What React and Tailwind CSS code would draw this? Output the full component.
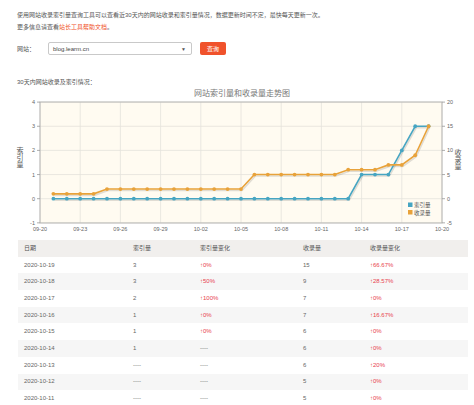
import React from 'react';

const FONT = { fontFamily: '"Liberation Sans", "Noto Sans CJK SC", sans-serif' };

// day offsets from 09-20, one point per day 09-21..10-19
const indexData = [...Array(23).fill(0), 1, 1, 1, 2, 3, 3];
const recordData = [
  ...Array(4).fill(1),
  ...Array(11).fill(2),
  ...Array(7).fill(5),
  6, 6, 6, 7, 7, 9, 15,
];

const X0 = 40;
const DAY = 13.4;
const Y0 = 198.7;
const xAt = (d) => X0 + d * DAY;
const yLeft = (v) => Y0 - v * 24.15;
const yRight = (v) => Y0 - v * 4.83;

const xLabels = ['09-20', '09-23', '09-26', '09-29', '10-02', '10-05', '10-08', '10-11', '10-14', '10-17', '10-20'];
const leftTicks = [4, 3, 2, 1, 0, -1];
const rightTicks = [20, 15, 10, 5, 0, -5];

const rows = [
  ['2020-10-19', '3', '↑0%', '15', '↑66.67%'],
  ['2020-10-18', '3', '↑50%', '9', '↑28.57%'],
  ['2020-10-17', '2', '↑100%', '7', '↑0%'],
  ['2020-10-16', '1', '↑0%', '7', '↑16.67%'],
  ['2020-10-15', '1', '↑0%', '6', '↑0%'],
  ['2020-10-14', '1', '----', '6', '↑0%'],
  ['2020-10-13', '----', '----', '6', '↑20%'],
  ['2020-10-12', '----', '----', '5', '↑0%'],
  ['2020-10-11', '----', '----', '5', '↑0%'],
];

function Chart() {
  const blue = '#46a5c2';
  const orange = '#e8a23a';
  const bluePts = indexData.map((v, i) => [xAt(i + 1), yLeft(v)]);
  const orangePts = recordData.map((v, i) => [xAt(i + 1), yRight(v)]);
  const toStr = (pts) => pts.map((p) => p.join(',')).join(' ');

  return (
    <svg width="474" height="148" viewBox="0 88 474 148" className="block" style={FONT}>
      <rect x={X0} y="102" width="402" height="121" fill="#fffbf1" />
      {leftTicks.map((t) => (
        <line key={t} x1={X0} x2="442" y1={yLeft(t)} y2={yLeft(t)} stroke="#e4e2dc" strokeWidth="0.8" />
      ))}
      {xLabels.map((l, i) => (
        <line key={l} x1={xAt(i * 3)} x2={xAt(i * 3)} y1="102" y2="223" stroke="#e4e2dc" strokeWidth="0.8" />
      ))}
      <rect x={X0} y="102" width="402" height="121" fill="none" stroke="#a9a9a9" strokeWidth="0.8" />

      <text x="242" y="96" textAnchor="middle" fontSize="8" fill="#777">网站索引量和收录量走势图</text>

      {leftTicks.map((t) => (
        <g key={t}>
          <line x1="37" x2={X0} y1={yLeft(t)} y2={yLeft(t)} stroke="#999" strokeWidth="0.8" />
          <text x="35" y={yLeft(t) + 2} textAnchor="end" fontSize="5.5" fill="#666">{t}</text>
        </g>
      ))}
      {rightTicks.map((t, i) => (
        <g key={t}>
          <line x1="442" x2="445" y1={yLeft(leftTicks[i])} y2={yLeft(leftTicks[i])} stroke="#999" strokeWidth="0.8" />
          <text x="447" y={yLeft(leftTicks[i]) + 2} fontSize="5.5" fill="#666">{t}</text>
        </g>
      ))}
      {xLabels.map((l, i) => (
        <text key={l} x={xAt(i * 3)} y="231" textAnchor="middle" fontSize="5.5" fill="#666">{l}</text>
      ))}

      {['索', '引', '量'].map((c, i) => (
        <text key={c} x="20" y={153 + i * 7} textAnchor="middle" fontSize="7" fill="#555">{c}</text>
      ))}
      {['收', '录', '量'].map((c, i) => (
        <text key={c} x="458" y={155 + i * 7} textAnchor="middle" fontSize="7" fill="#555">{c}</text>
      ))}

      <polyline points={toStr(orangePts.map(([x, y]) => [x + 1, y + 1.5]))} fill="none" stroke="#000" strokeOpacity="0.12" strokeWidth="1.6" />
      <polyline points={toStr(bluePts.map(([x, y]) => [x + 1, y + 1.5]))} fill="none" stroke="#000" strokeOpacity="0.12" strokeWidth="1.6" />
      <polyline points={toStr(bluePts)} fill="none" stroke={blue} strokeWidth="1.6" />
      {bluePts.map(([x, y], i) => (
        <circle key={'b' + i} cx={x} cy={y} r="1.9" fill={blue} />
      ))}
      <polyline points={toStr(orangePts)} fill="none" stroke={orange} strokeWidth="1.6" />
      {orangePts.map(([x, y], i) => (
        <circle key={'o' + i} cx={x} cy={y} r="1.9" fill={orange} />
      ))}

      <rect x="408" y="202.5" width="4.5" height="4.5" fill={blue} />
      <text x="414" y="207" fontSize="5.5" fill="#555">索引量</text>
      <rect x="408" y="210" width="4.5" height="4.5" fill={orange} />
      <text x="414" y="214.5" fontSize="5.5" fill="#555">收录量</text>
    </svg>
  );
}

export default function App() {
  return (
    <div className="w-[474px] h-[405px] overflow-hidden bg-white text-[6px] text-[#555]" style={FONT}>
      <div className="px-[17px] pt-[9px] leading-[12px]">
        <p>使用网站收录索引量查询工具可以查看近30天内的网站收录和索引量情况，数据更新时间不定，最快每天更新一次。</p>
        <p>
          更多信息请查看<span className="text-[#f0522a]">站长工具帮助文档</span>。
        </p>
        <div className="mt-[9px] flex items-center h-[13px]">
          <span className="w-[31px]">网站：</span>
          <div className="w-[144px] h-[13px] border border-[#c9c9c9] rounded-[2px] flex items-center justify-between pl-[4px] pr-[5px] text-[#444]">
            <span>blog.learm.cn</span>
            <span className="text-[5px] text-[#555]">▼</span>
          </div>
          <div className="ml-[8px] w-[26px] h-[13px] rounded-[2px] bg-[#f0522b] text-white flex items-center justify-center">
            查询
          </div>
        </div>
        <p className="mt-[21px]">30天内网站收录及索引情况：</p>
      </div>

      <Chart />

      <div className="mt-[4px] ml-[18px] w-[450px] text-[#666]">
        <div className="grid grid-cols-[109px_67px_103px_67px_104px] h-[16.7px] items-center bg-[#f1efed] text-[#555]">
          <span className="pl-[6px]">日期</span>
          <span className="pl-[6px]">索引量</span>
          <span className="pl-[6px]">索引量变化</span>
          <span className="pl-[6px]">收录量</span>
          <span className="pl-[6px]">收录量变化</span>
        </div>
        {rows.map((r, i) => (
          <div
            key={r[0]}
            className={`grid grid-cols-[109px_67px_103px_67px_104px] h-[16.7px] items-center ${i % 2 === 1 ? 'bg-[#f6f6f6]' : 'bg-white'}`}
          >
            <span className="pl-[6px]">{r[0]}</span>
            <span className="pl-[6px]">{r[1]}</span>
            <span className={`pl-[6px] ${r[2].startsWith('↑') ? 'text-[#e8414e]' : ''}`}>{r[2]}</span>
            <span className="pl-[6px]">{r[3]}</span>
            <span className="pl-[6px] text-[#e8414e]">{r[4]}</span>
          </div>
        ))}
      </div>
    </div>
  );
}
